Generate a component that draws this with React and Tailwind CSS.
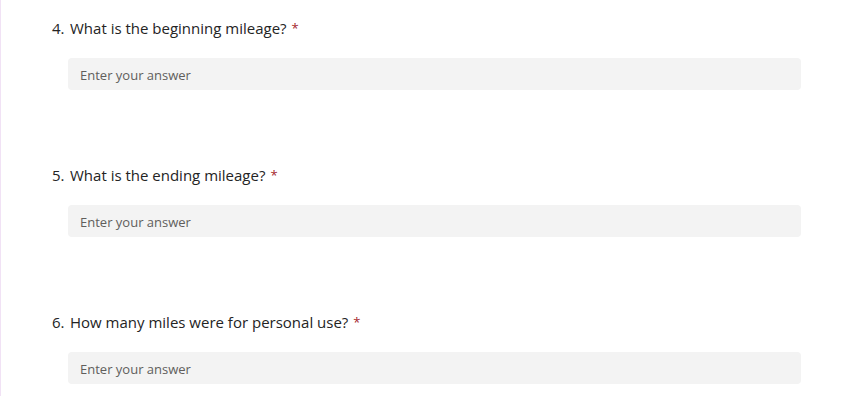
export default function App() {
  const questions = [
    { n: "4.", text: "What is the beginning mileage?" },
    { n: "5.", text: "What is the ending mileage?" },
    { n: "6.", text: "How many miles were for personal use?" },
  ];

  return (
    <div
      className="w-[841px] h-[396px] bg-white border-l border-[#f1e2f5] overflow-hidden pt-[18px] pl-[51px]"
      style={{ fontFamily: '"Segoe UI", "Open Sans", "Noto Sans", sans-serif' }}
    >
      {questions.map((q) => (
        <div key={q.n} className="mb-[75px]">
          {/* Title */}
          <div className="flex items-center h-[20px] text-[15px] text-[#242424]">
            <span className="w-[18px] shrink-0">{q.n}</span>
            <span>{q.text}</span>
            <span className="ml-[5px] text-[#a4262c] text-[13px] translate-y-[1px]">*</span>
          </div>

          {/* Answer input */}
          <div className="mt-[20px] ml-[16px] w-[733px] h-[32px] rounded-[4px] bg-[#f3f3f3] flex items-center px-[12px] pt-[3px]">
            <span className="text-[13px] text-[#605e5c]">Enter your answer</span>
          </div>
        </div>
      ))}
    </div>
  );
}
